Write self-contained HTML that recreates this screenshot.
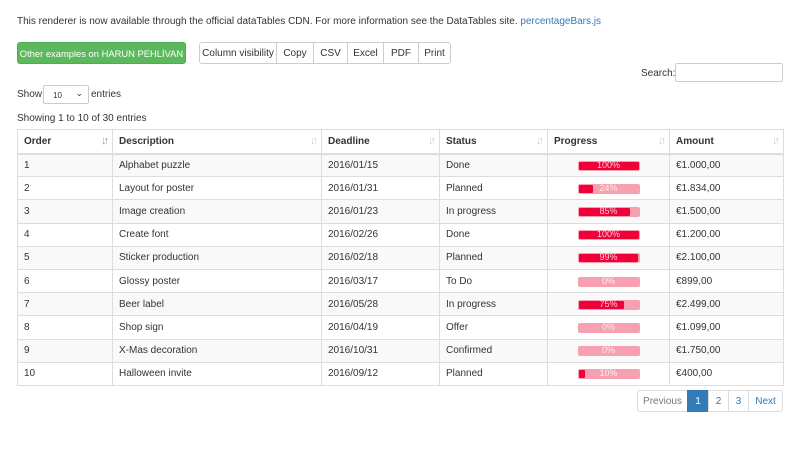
<!DOCTYPE html>
<html><head><meta charset="utf-8"><style>
*{box-sizing:border-box;margin:0;padding:0}
body{width:800px;height:450px;background:#fff;font-family:"Liberation Sans",sans-serif;font-size:10px;color:#333;position:relative;overflow:hidden}
.a{position:absolute;white-space:nowrap}
a{color:#337ab7;text-decoration:none}
.btn{position:absolute;top:42px;height:22px;border:1px solid #ccc;background:#fff;font-size:10px;line-height:22px;text-align:center;white-space:nowrap;overflow:hidden}
table{position:absolute;left:17px;top:129px;width:766px;border-collapse:collapse;table-layout:fixed}
td,th{border:1px solid #ddd;padding:1px 6px 0;text-align:left;height:23.2px;font-size:10px;line-height:12px}
th{font-weight:bold;height:24px;border-bottom:2px solid #ddd;position:relative}
th span{position:absolute;right:6px;top:5px;color:#ccc;font-size:11px;letter-spacing:-3px;font-weight:bold}
tbody tr:nth-child(odd){background:#f9f9f9}
.pb{width:62px;height:10px;margin:0 auto;background:#f7a1b0;border-radius:2px;position:relative;padding:1px}
.pb i{display:block;height:8px;background:#f00038;border-radius:1px}
.pb b{position:absolute;left:0;right:0;top:-1px;text-align:center;color:#fff;font-weight:normal;font-size:9px;line-height:11px;opacity:.8}
.pg{position:absolute;top:390px;height:22px;border:1px solid #ddd;color:#337ab7;line-height:21px;text-align:center;font-size:10px}
</style></head><body>
<div class="a" style="left:17px;top:16px">This renderer is now available through the official dataTables CDN. For more information see the DataTables site. <a>percentageBars.js</a></div>
<div class="btn" style="left:17px;width:169px;background:#5cb85c;border-color:#4cae4c;color:#fff;border-radius:3px;font-size:9.4px">Other examples on HARUN PEHLİVAN</div>
<div class="btn" style="left:199px;width:78px;border-radius:3px 0 0 3px">Column visibility</div>
<div class="btn" style="left:276px;width:38px">Copy</div>
<div class="btn" style="left:313px;width:35px">CSV</div>
<div class="btn" style="left:347px;width:37px">Excel</div>
<div class="btn" style="left:383px;width:36px">PDF</div>
<div class="btn" style="left:418px;width:33px;border-radius:0 3px 3px 0">Print</div>
<div class="a" style="left:641px;top:68px">Search:</div>
<div class="a" style="left:675px;top:63px;width:108px;height:19px;border:1px solid #ccc;border-radius:2px"></div>
<div class="a" style="left:17px;top:89px">Show</div>
<div class="a" style="left:43px;top:85px;width:46px;height:19px;border:1px solid #ccc;border-radius:2px;font-size:8px;padding:5px 0 0 9px">10<span style="position:absolute;right:5px;top:2px;font-size:9px">⌄</span></div>
<div class="a" style="left:91px;top:89px">entries</div>
<div class="a" style="left:17px;top:113px">Showing 1 to 10 of 30 entries</div>
<table>
<colgroup><col style="width:95px"><col style="width:209px"><col style="width:118px"><col style="width:108px"><col style="width:122px"><col style="width:114px"></colgroup>
<thead><tr><th>Order<span style="color:#999">↓↑</span></th><th>Description<span>↓↑</span></th><th>Deadline<span>↓↑</span></th><th>Status<span>↓↑</span></th><th>Progress<span>↓↑</span></th><th>Amount<span>↓↑</span></th></tr></thead>
<tbody>
<tr><td>1</td><td>Alphabet puzzle</td><td>2016/01/15</td><td>Done</td><td><div class="pb"><i style="width:100%"></i><b>100%</b></div></td><td>€1.000,00</td></tr>
<tr><td>2</td><td>Layout for poster</td><td>2016/01/31</td><td>Planned</td><td><div class="pb"><i style="width:24%"></i><b>24%</b></div></td><td>€1.834,00</td></tr>
<tr><td>3</td><td>Image creation</td><td>2016/01/23</td><td>In progress</td><td><div class="pb"><i style="width:85%"></i><b>85%</b></div></td><td>€1.500,00</td></tr>
<tr><td>4</td><td>Create font</td><td>2016/02/26</td><td>Done</td><td><div class="pb"><i style="width:100%"></i><b>100%</b></div></td><td>€1.200,00</td></tr>
<tr><td>5</td><td>Sticker production</td><td>2016/02/18</td><td>Planned</td><td><div class="pb"><i style="width:99%"></i><b>99%</b></div></td><td>€2.100,00</td></tr>
<tr><td>6</td><td>Glossy poster</td><td>2016/03/17</td><td>To Do</td><td><div class="pb"><i style="width:0"></i><b>0%</b></div></td><td>€899,00</td></tr>
<tr><td>7</td><td>Beer label</td><td>2016/05/28</td><td>In progress</td><td><div class="pb"><i style="width:75%"></i><b>75%</b></div></td><td>€2.499,00</td></tr>
<tr><td>8</td><td>Shop sign</td><td>2016/04/19</td><td>Offer</td><td><div class="pb"><i style="width:0"></i><b>0%</b></div></td><td>€1.099,00</td></tr>
<tr><td>9</td><td>X-Mas decoration</td><td>2016/10/31</td><td>Confirmed</td><td><div class="pb"><i style="width:0"></i><b>0%</b></div></td><td>€1.750,00</td></tr>
<tr><td>10</td><td>Halloween invite</td><td>2016/09/12</td><td>Planned</td><td><div class="pb"><i style="width:10%"></i><b>10%</b></div></td><td>€400,00</td></tr>
</tbody></table>
<div class="pg" style="left:637px;width:51px;color:#777;border-radius:3px 0 0 3px">Previous</div>
<div class="pg" style="left:687px;width:22px;background:#337ab7;border-color:#337ab7;color:#fff">1</div>
<div class="pg" style="left:708px;width:21px">2</div>
<div class="pg" style="left:728px;width:21px">3</div>
<div class="pg" style="left:748px;width:35px;border-radius:0 3px 3px 0">Next</div>
</body></html>
